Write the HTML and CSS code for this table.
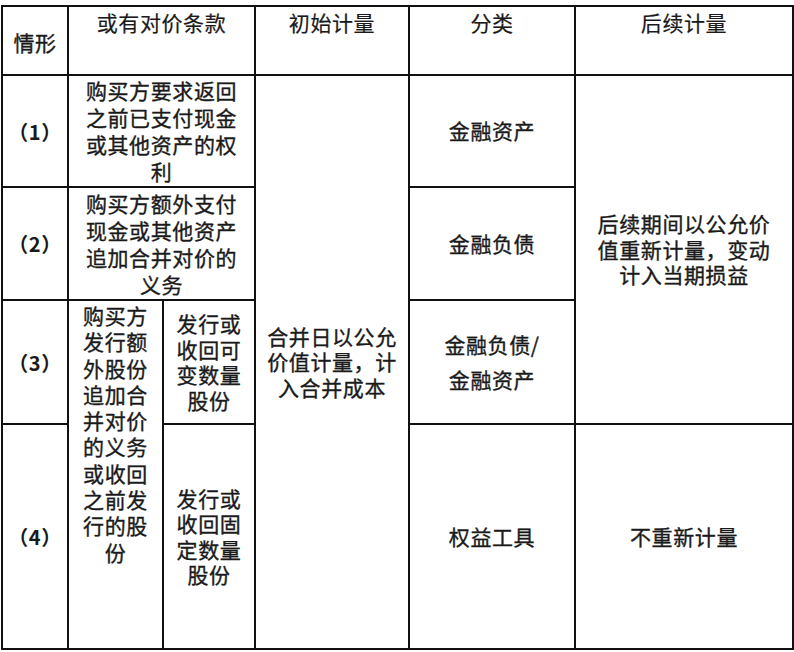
FILE: index.html
```html
<!DOCTYPE html>
<html lang="zh-CN">
<head>
<meta charset="utf-8">
<title>或有对价</title>
<link rel="stylesheet" href="styles.css">
</head>
<body>
<table class="grid">
  <colgroup>
    <col class="c-case">
    <col class="c-term-a">
    <col class="c-term-b">
    <col class="c-init">
    <col class="c-class">
    <col class="c-later">
  </colgroup>
  <tr class="r-head">
    <th class="case-head">情形</th>
    <th class="head" colspan="2">或有对价条款</th>
    <th class="head">初始计量</th>
    <th class="head">分类</th>
    <th class="head">后续计量</th>
  </tr>
  <tr class="r-1">
    <td class="num">（1）</td>
    <td colspan="2">购买方要求返回<br>之前已支付现金<br>或其他资产的权<br>利</td>
    <td rowspan="4" class="plain">合并日以公允<br>价值计量，计<br>入合并成本</td>
    <td class="plain">金融资产</td>
    <td rowspan="3" class="plain">后续期间以公允价<br>值重新计量，变动<br>计入当期损益</td>
  </tr>
  <tr class="r-2">
    <td class="num">（2）</td>
    <td colspan="2">购买方额外支付<br>现金或其他资产<br>追加合并对价的<br>义务</td>
    <td class="plain">金融负债</td>
  </tr>
  <tr class="r-3">
    <td class="num">（3）</td>
    <td rowspan="2" class="top">购买方<br>发行额<br>外股份<br>追加合<br>并对价<br>的义务<br>或收回<br>之前发<br>行的股<br>份</td>
    <td class="tight">发行或<br>收回可<br>变数量<br>股份</td>
    <td class="plain wide">金融负债/<br>金融资产</td>
  </tr>
  <tr class="r-4">
    <td class="num">（4）</td>
    <td class="tight">发行或<br>收回固<br>定数量<br>股份</td>
    <td class="plain">权益工具</td>
    <td class="plain">不重新计量</td>
  </tr>
</table>
</body>
</html>
```

FILE: styles.css
```css
html, body {
  margin: 0;
  padding: 0;
  background: #ffffff;
}

body {
  font-family: "Noto Sans CJK SC", "Noto Sans", sans-serif;
  color: #1a1a1a;
}

.grid {
  margin: 5px 0 0 1px;
  border-collapse: collapse;
  table-layout: fixed;
  width: 791px;
}

.c-case { width: 66px; }
.c-term-a { width: 95px; }
.c-term-b { width: 92px; }
.c-init { width: 154px; }
.c-class { width: 166px; }
.c-later { width: 218px; }

.grid th,
.grid td {
  border: 2px solid #111111;
  padding: 0;
  text-align: center;
  vertical-align: middle;
  font-size: 21px;
  line-height: 27px;
  letter-spacing: 0.6px;
  font-weight: 400;
  -webkit-text-stroke: 0.35px #1a1a1a;
}

.grid th.head {
  vertical-align: top;
  padding-top: 2px;
  -webkit-text-stroke: 0.2px #1a1a1a;
}

.grid th.case-head {
  padding-top: 4px;
}

.r-head { height: 69px; }
.r-1 { height: 112px; }
.r-2 { height: 113px; }
.r-3 { height: 124px; }
.r-4 { height: 225px; }

.grid td.num {
  font-weight: 700;
  font-size: 20px;
  -webkit-text-stroke: 0;
}

.grid td.plain {
  line-height: 25.5px;
}

.grid td.tight {
  line-height: 25.5px;
}

.grid td.top {
  vertical-align: top;
  line-height: 26.3px;
  padding-top: 1px;
}

.grid td.wide {
  line-height: 35px;
}
```
